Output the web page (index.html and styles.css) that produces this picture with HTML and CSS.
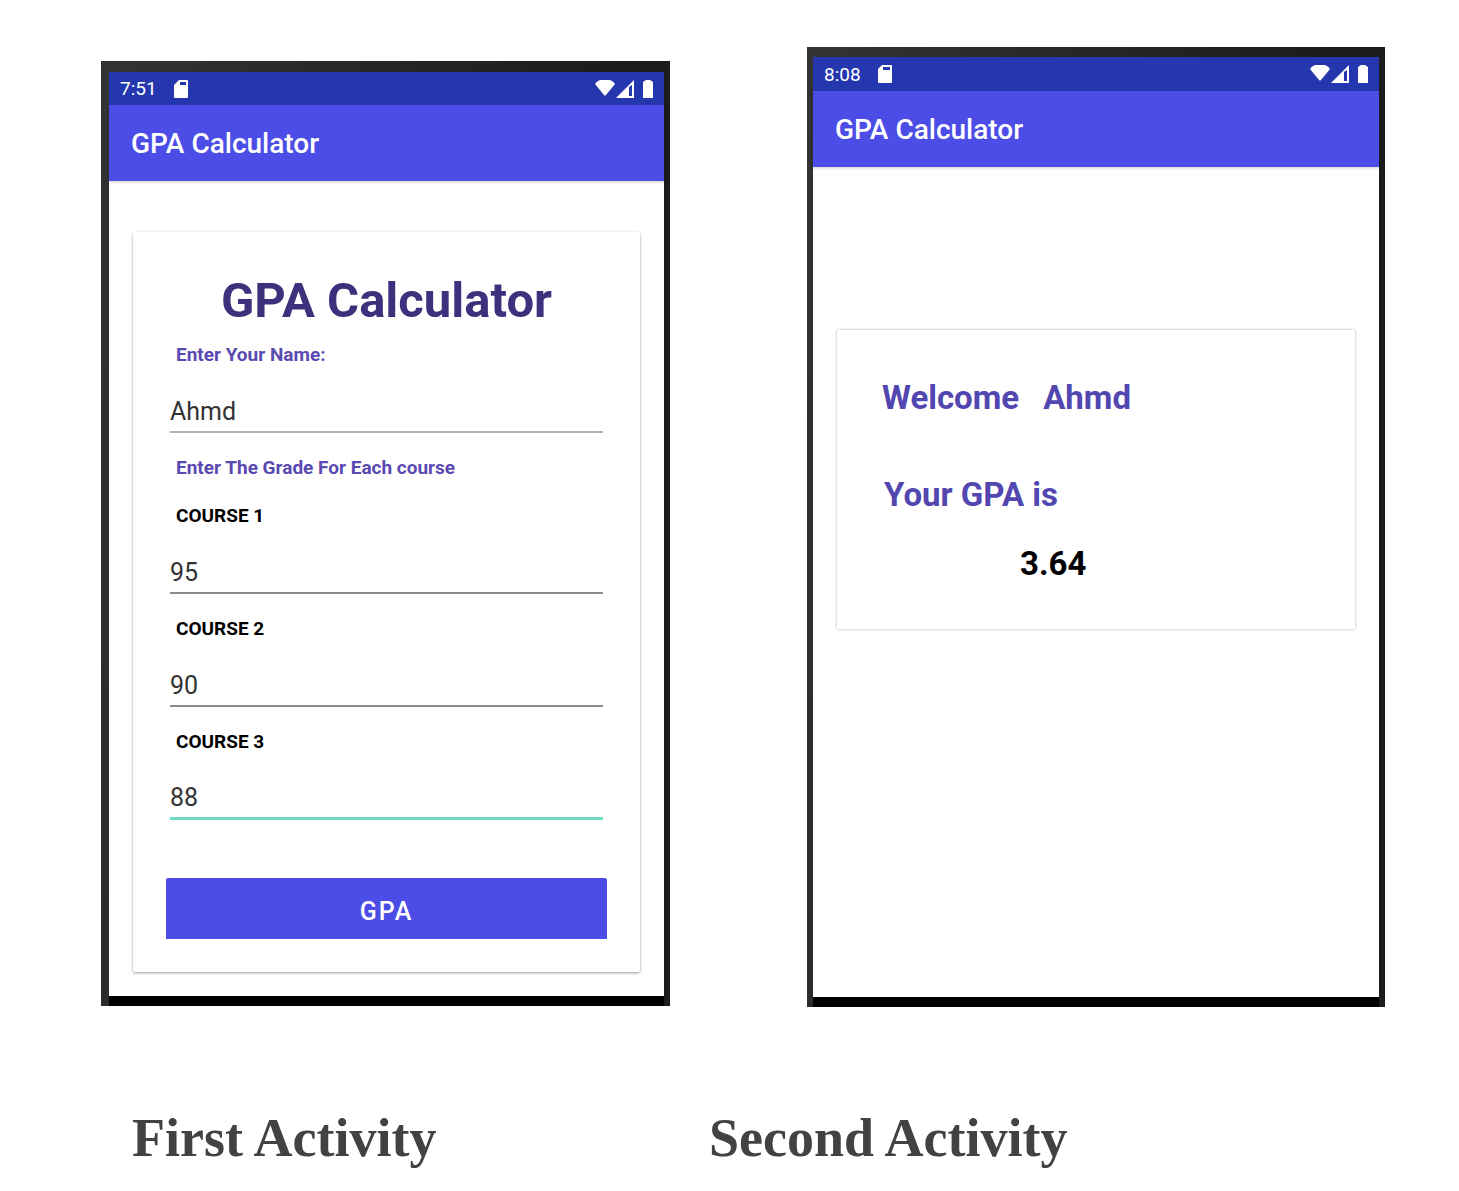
FILE: index.html
```html
<!DOCTYPE html>
<html lang="en">

<head>
    <meta charset="UTF-8">
    <meta name="viewport" content="width=device-width, initial-scale=1.0">
    <title>GPA Calculator</title>
    <link rel="stylesheet" href="styles.css">
</head>

<body>
    <main class="phones">
        <!-- first activity: the form -->
        <section class="phone phone-first">
            <div class="screen">
                <div class="status-bar">
                    <span class="time">7:51</span>
                    <svg class="icon-sd" width="14" height="18" viewBox="0 0 14 18">
                        <path fill="#fff" fill-rule="evenodd" d="M5 0h8q1 0 1 1v16q0 1-1 1H1q-1 0-1-1V5zM6 2v3h6V2z" />
                    </svg>
                    <svg class="icon-signal" width="58" height="18" viewBox="0 0 58 18">
                        <path fill="#fff" d="M0 4Q3 0 6 0h8q3 0 6 4L11 15q-1 1-2 0z" />
                        <path fill="#fff" fill-rule="evenodd" d="M21 18L39 0v18zM34 7v9h3V5z" />
                        <path fill="#fff" d="M48 2l3-2h4l3 2v16H48z" />
                    </svg>
                </div>
                <header class="app-bar">
                    <h2>GPA Calculator</h2>
                </header>
                <form class="card card-form">
                    <h1>GPA Calculator</h1>
                    <label for="name" class="name-label">Enter Your Name:</label>
                    <input type="text" id="name" name="name" value="Ahmd" class="name-input">
                    <p class="hint">Enter The Grade For Each course</p>
                    <label for="course1" class="course">COURSE 1</label>
                    <input type="text" id="course1" name="course1" value="95">
                    <label for="course2" class="course">COURSE 2</label>
                    <input type="text" id="course2" name="course2" value="90">
                    <label for="course3" class="course">COURSE 3</label>
                    <input type="text" id="course3" name="course3" value="88" class="active">
                    <button type="button" class="btn-gpa">GPA</button>
                </form>
            </div>
        </section>

        <!-- second activity: the result -->
        <section class="phone phone-second">
            <div class="screen">
                <div class="status-bar">
                    <span class="time">8:08</span>
                    <svg class="icon-sd" width="14" height="18" viewBox="0 0 14 18">
                        <path fill="#fff" fill-rule="evenodd" d="M4 0h9q1 0 1 1v16q0 1-1 1H1q-1 0-1-1V4zM5 2v3h7V2z" />
                    </svg>
                    <svg class="icon-signal" width="58" height="18" viewBox="0 0 58 18">
                        <path fill="#fff" d="M0 4Q3 0 6 0h8q3 0 6 4L11 15q-1 1-2 0z" />
                        <path fill="#fff" fill-rule="evenodd" d="M21 18L39 0v18zM34 7v9h3V5z" />
                        <path fill="#fff" d="M48 2l3-2h4l3 2v16H48z" />
                    </svg>
                </div>
                <header class="app-bar">
                    <h2>GPA Calculator</h2>
                </header>
                <div class="card card-result">
                    <p class="welcome"><span>Welcome</span><span>Ahmd</span></p>
                    <p class="gpa-text">Your GPA is</p>
                    <p class="gpa-value">3.64</p>
                </div>
            </div>
        </section>
    </main>

    <footer class="captions">
        <p>First Activity</p>
        <p>Second Activity</p>
    </footer>
</body>

</html>
```

FILE: styles.css
```css
* {
    margin: 0;
    padding: 0;
    box-sizing: border-box;
}

body {
    background-color: #ffffff;
    font-family: Roboto, 'Liberation Sans', sans-serif;
}

.phones {
    display: flex;
    gap: 137px;
    padding: 47px 74px 0 101px;
}

.phone {
    display: flex;
    min-width: 0;
    background: linear-gradient(100deg, #333333, #1c1c1c 70%);
}

.phone-first {
    flex: 555;
    padding: 11px 6px 0 8px;
    margin: 14px 0 1px;
}

.phone-second {
    flex: 566;
    padding: 10px 6px 0;
}

.screen {
    flex: 1;
    min-width: 0;
    background-color: #ffffff;
    border-bottom: 10px solid #000000;
}

.status-bar {
    display: flex;
    align-items: center;
    height: 33px;
    padding: 0 11px;
    background-color: #2437ae;
    color: #ffffff;
}

.phone-second .status-bar {
    height: 34px;
}

.time {
    width: 54px;
    font-size: 19px;
}

.icon-signal {
    margin-left: auto;
}

.app-bar {
    display: flex;
    align-items: center;
    height: 76px;
    padding: 0 22px;
    background-color: #4c4de6;
    color: #ffffff;
    box-shadow: 0 1px 3px rgba(0, 0, 0, 0.2);
}

.app-bar h2 {
    font-size: 28px;
    font-weight: 500;
}

.card {
    display: flex;
    flex-direction: column;
    border-radius: 2px;
    background-color: #ffffff;
}

.card-form {
    margin: 51px 24px 24px;
    padding: 39px 33px 33px;
    box-shadow: 0 1px 3px rgba(0, 0, 0, 0.4);
}

h1 {
    color: #3c317c;
    font-size: 49px;
    line-height: 60px;
    text-align: center;
}

.name-label,
.hint,
.course {
    margin-top: 23px;
    padding-left: 10px;
    color: #5a49b0;
    font-size: 19px;
    font-weight: 700;
    line-height: 24px;
}

.name-label {
    margin-top: 12px;
}

.course {
    color: #000000;
}

.hint + .course {
    margin-top: 24px;
}

input {
    height: 42px;
    margin: 24px 4px 0;
    border: none;
    border-bottom: 2px solid #8c8c8c;
    background: none;
    color: #333333;
    font-family: inherit;
    font-size: 25px;
    outline: none;
}

.name-input {
    border-color: #b0b0b0;
}

.active {
    border-bottom: 3px solid #70dac8;
}

.btn-gpa {
    height: 61px;
    margin-top: 58px;
    padding-top: 6px;
    border: none;
    border-radius: 2px 2px 0 0;
    background-color: #4c4de6;
    color: #ffffff;
    font-family: inherit;
    font-size: 25px;
    font-weight: 500;
    letter-spacing: 2px;
    cursor: pointer;
}

.card-result {
    margin: 163px 24px 0;
    padding: 48px 45px 45px;
    box-shadow: 0 0 3px rgba(0, 0, 0, 0.35);
    color: #5246b0;
    font-size: 33px;
    font-weight: 700;
    line-height: 40px;
}

.welcome {
    display: flex;
    gap: 24px;
}

.gpa-text {
    margin-top: 57px;
    padding-left: 2px;
}

.gpa-value {
    margin-top: 29px;
    padding-left: 138px;
    color: #000000;
}

.captions {
    display: grid;
    grid-template-columns: 577fr 618fr;
    padding: 100px 132px 0;
    color: #424242;
    font-family: 'Liberation Serif', serif;
    font-size: 54px;
    font-weight: 700;
    line-height: 62px;
}
```
